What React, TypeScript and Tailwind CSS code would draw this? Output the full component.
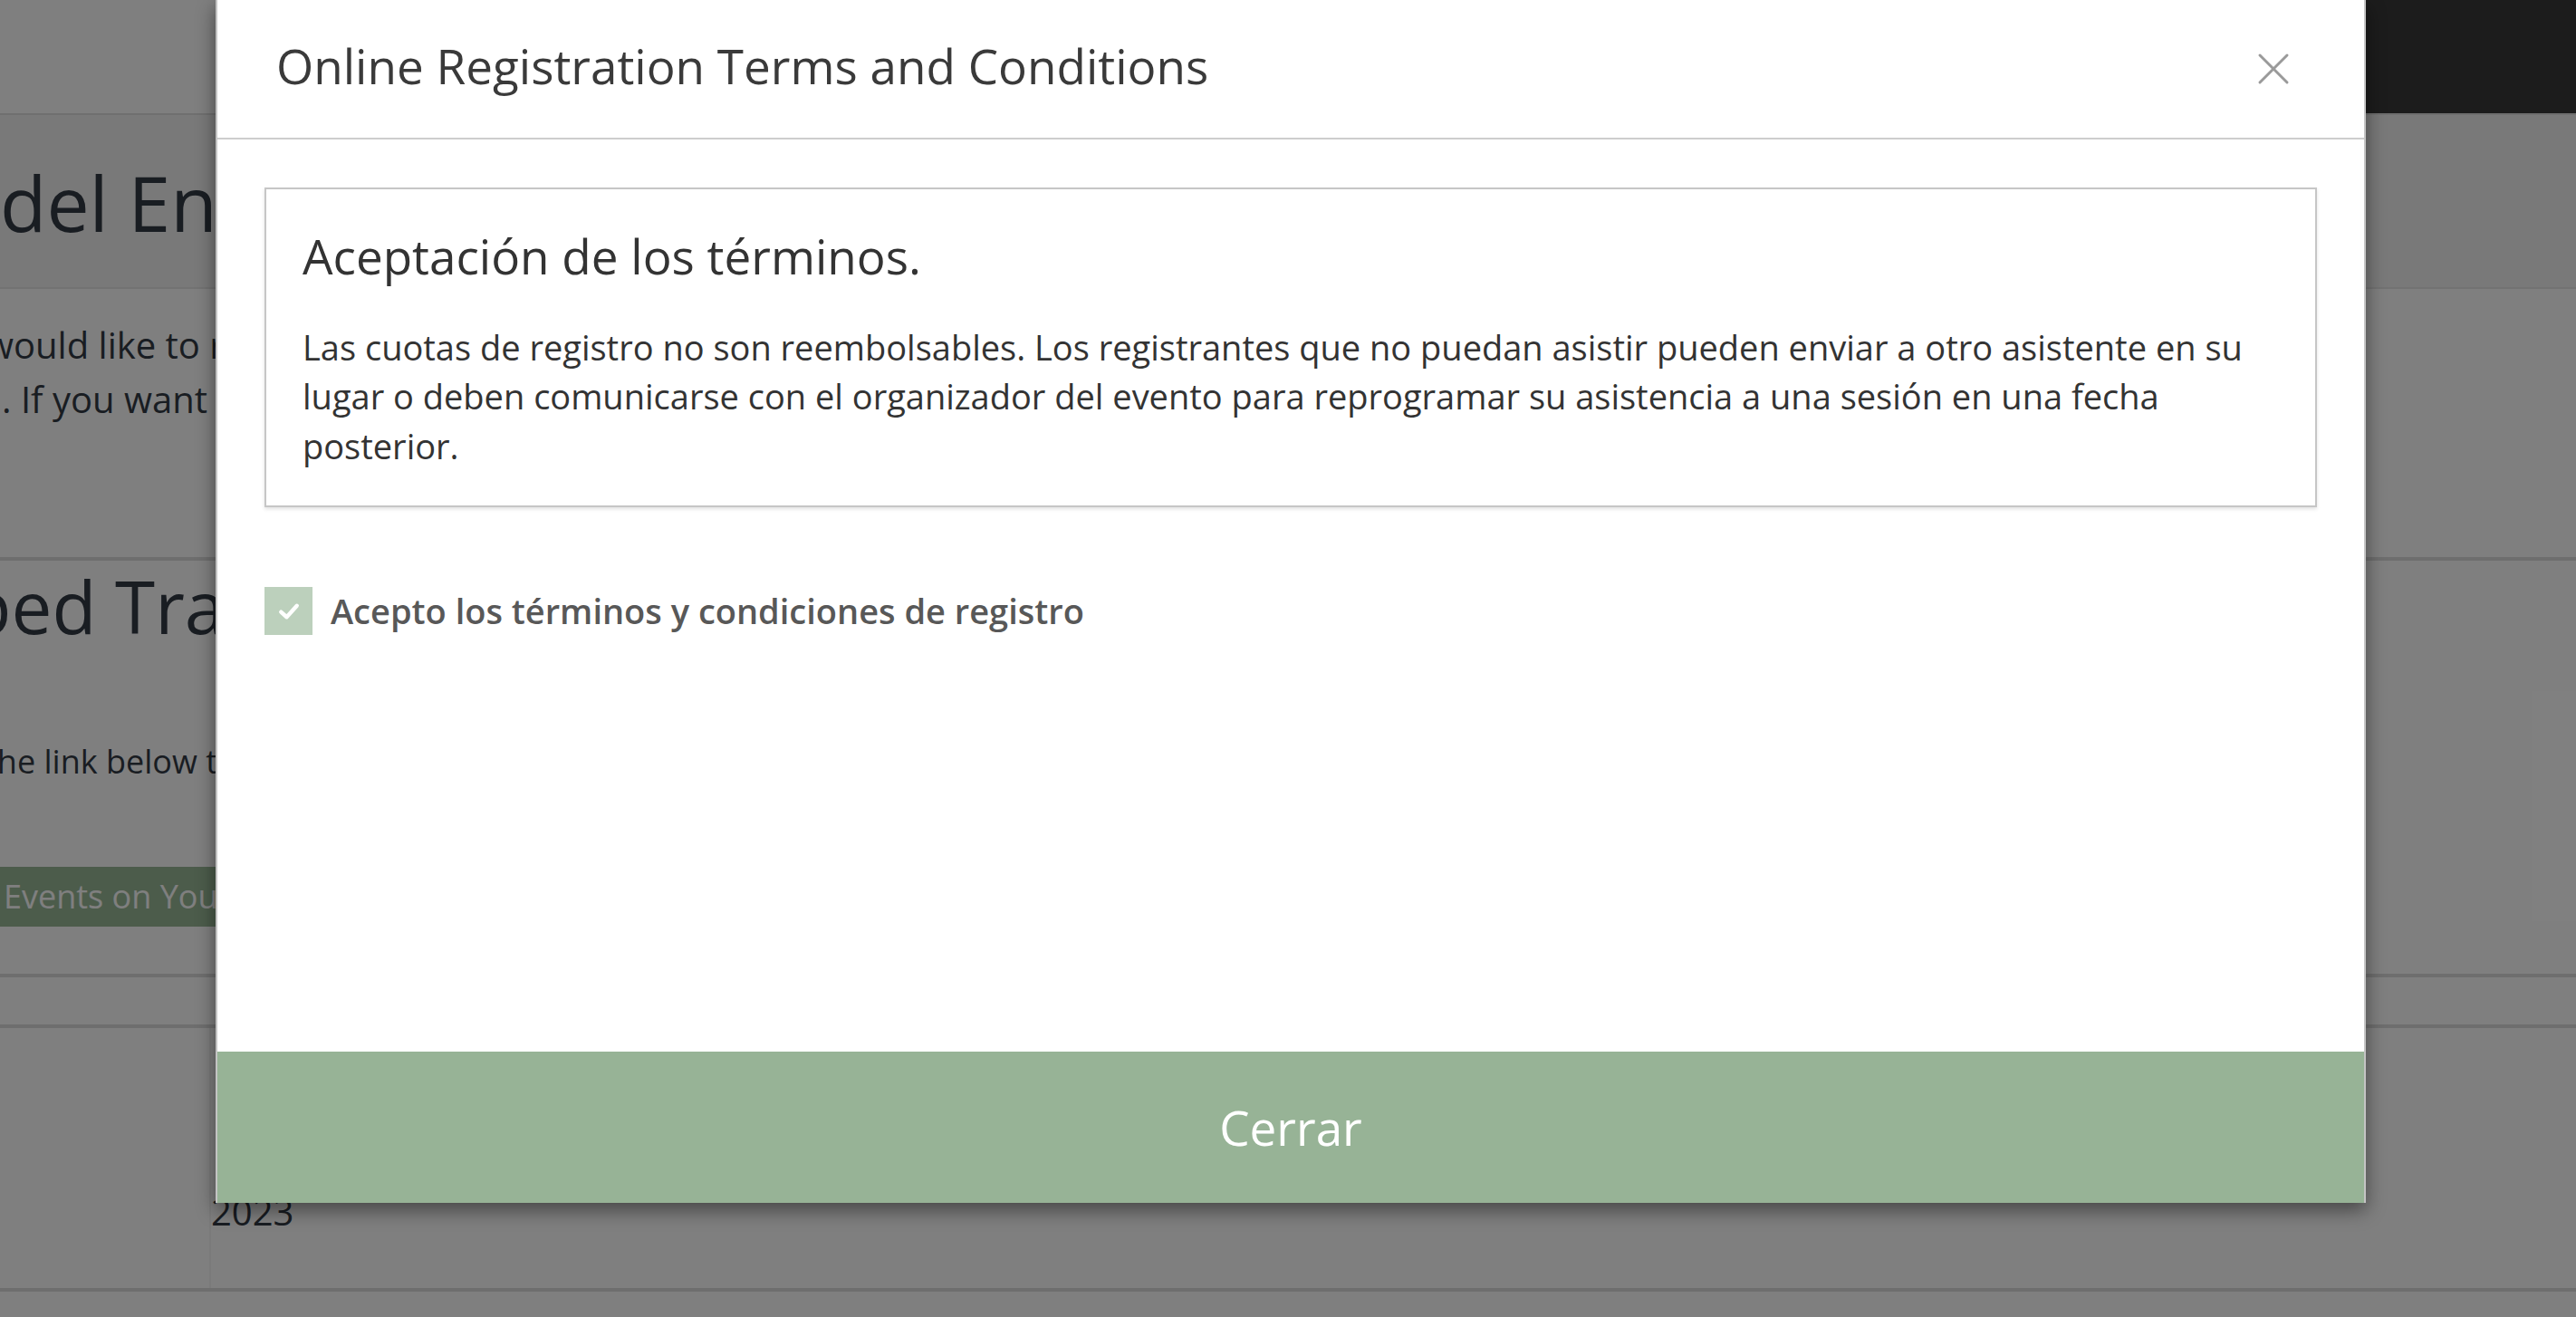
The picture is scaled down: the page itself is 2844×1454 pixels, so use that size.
const font = { fontFamily: '"Open Sans", "Noto Sans", sans-serif' };

const CloseIcon = () => (
  <svg width="36" height="36" viewBox="0 0 36 36" fill="none" stroke="#9a9a9a" strokeWidth="3" strokeLinecap="round">
    <line x1="3" y1="3" x2="33" y2="33" />
    <line x1="33" y1="3" x2="3" y2="33" />
  </svg>
);

const CheckIcon = () => (
  <svg width="30" height="30" viewBox="0 0 24 24" fill="none" stroke="#ffffff" strokeWidth="3.5" strokeLinecap="round" strokeLinejoin="round">
    <polyline points="5,12.5 10,17 19,7" />
  </svg>
);

const BackgroundPage = () => {
  return (
    <div className="flex flex-col w-full text-[#333a45]">
      {/* top nav */}
      <div className="flex h-[127px] border-b-2 border-[#dedede]">
        <div className="flex-1 bg-white"></div>
        <div className="w-[900px] bg-[#383838]"></div>
      </div>

      <div className="h-[192px] bg-[#f2f2f2] border-b-2 border-[#e4e4e4] flex items-start pt-[47px]">
        <h1 className="text-[84px] leading-[100px] whitespace-nowrap">del Entrenamiento Presencial</h1>
      </div>

      <div className="h-[300px] border-b-4 border-[#dcdcdc] pt-[32px] text-[40px] leading-[60px] whitespace-nowrap">
        <p className="-ml-[16px]">would like to register for one of the upcoming sessions, select a date below</p>
        <p className="ml-[2px]">. If you want to attend more than one session please register separately.</p>
      </div>

      <div className="h-[460px] border-b-4 border-[#dcdcdc] flex flex-col whitespace-nowrap">
        <h2 className="text-[80px] leading-[100px] -ml-[125px]">Taped Training Sessions</h2>
        <p className="text-[36px] leading-[60px] mt-[92px] -ml-[16px]">the link below to view our recorded trainings.</p>
        <div className="mt-[86px] w-[700px] h-[66px] bg-[#98b997] flex items-center">
          <span className="text-[36px] text-white pl-[4px]">Events on YouTube</span>
        </div>
      </div>

      <div className="h-[56px] border-b-4 border-[#dcdcdc]"></div>

      <div className="h-[291px] border-b-4 border-[#dcdcdc] flex">
        <div className="w-[231px]"></div>
        <div className="flex-1 flex flex-col justify-end pb-[62px] border-l-2 border-[#f4f4f4]">
          <span className="text-[40px] leading-[44px]">2023</span>
        </div>
      </div>
    </div>
  );
};

const TermsModal = () => {
  return (
    <div className="absolute left-[238px] top-0 w-[2374px] h-[1328px] bg-white flex flex-col border-x-2 border-[#c4c4c4] shadow-[0_8px_20px_rgba(0,0,0,0.45)]">
      <div className="h-[154px] shrink-0 border-b-2 border-[#cdcdcd] flex items-center justify-between pl-[65px] pr-[82px]">
        <h3 className="text-[53px] text-[#3a3a3a] leading-[70px] mb-[6px]">Online Registration Terms and Conditions</h3>
        <button className="w-[36px] h-[36px] flex items-center justify-center">
          <CloseIcon />
        </button>
      </div>

      <div className="flex-1 px-[52px] pt-[53px]">
        <div className="border-2 border-[#c6c6c6] shadow-[0_2px_4px_rgba(0,0,0,0.12)] px-[40px] pt-[44px] pb-[39px]">
          <h4 className="text-[53px] leading-[60px] text-[#333333]">Aceptación de los términos.</h4>
          <p className="mt-[43px] text-[38px] leading-[54.4px] text-[#333333]">
            Las cuotas de registro no son reembolsables. Los registrantes que no puedan asistir pueden enviar a otro asistente en su lugar o deben comunicarse con el organizador del evento para reprogramar su asistencia a una sesión en una fecha posterior.
          </p>
        </div>

        <label className="mt-[86px] flex items-center gap-[20px]">
          <span className="w-[53px] h-[53px] bg-[#bcd0bc] flex items-center justify-center">
            <CheckIcon />
          </span>
          <span className="text-[38px] font-semibold text-[#585858]">Acepto los términos y condiciones de registro</span>
        </label>
      </div>

      <button className="h-[167px] shrink-0 bg-[#97b396] text-white text-[53px] flex items-center justify-center">
        Cerrar
      </button>
    </div>
  );
};

export default function App() {
  return (
    <div className="relative w-[2844px] h-[1454px] overflow-hidden bg-white" style={font}>
      <BackgroundPage />
      <div className="absolute inset-0 bg-black/50"></div>
      <TermsModal />
    </div>
  );
}
